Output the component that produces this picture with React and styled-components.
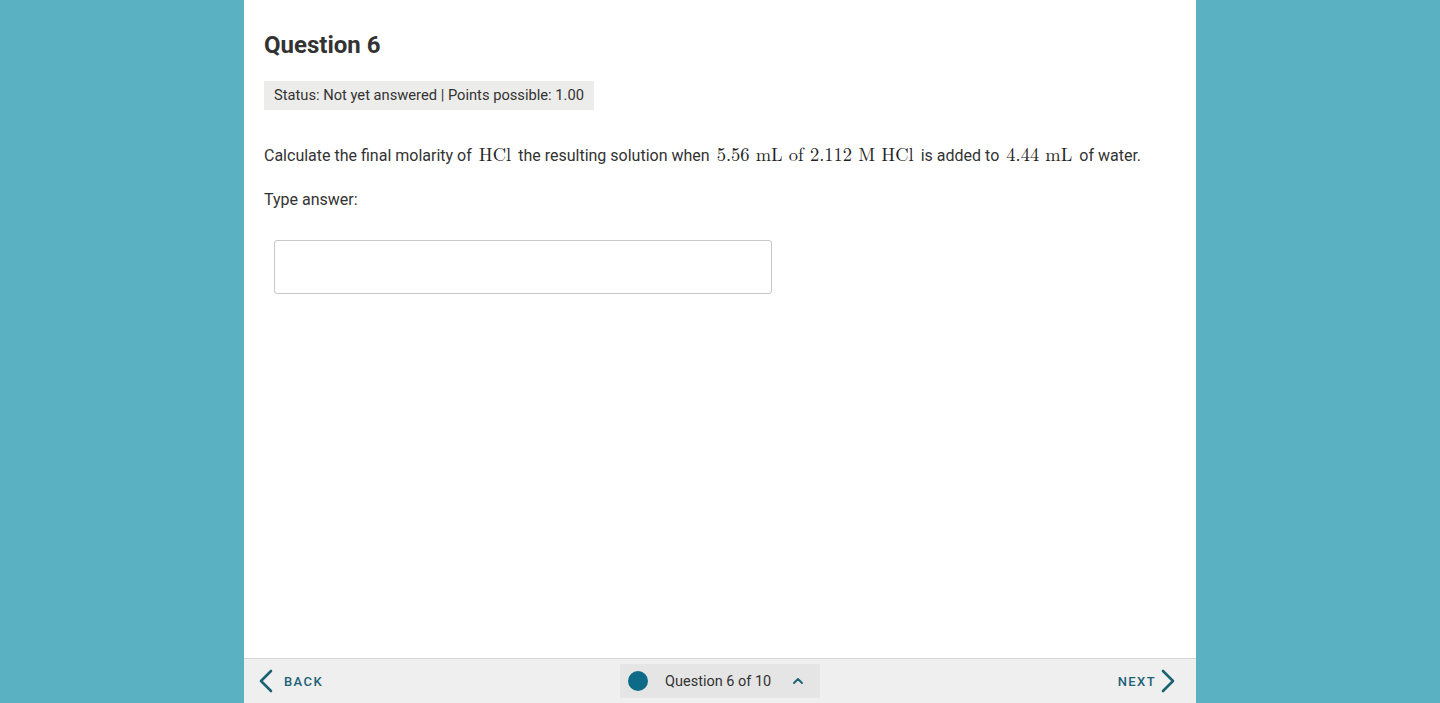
import React from "react";
import styled, { createGlobalStyle } from "styled-components";

const Global = createGlobalStyle`
  html, body {
    margin: 0;
    padding: 0;
    height: 100%;
  }
  body {
    background: #59b1c1;
    font-family: Roboto, "Liberation Sans", sans-serif;
    color: #333;
  }
  #root {
    height: 100%;
  }
`;

const Page = styled.div`
  height: 703px;
  display: flex;
  justify-content: center;
`;

const Panel = styled.main`
  width: 952px;
  background: #fff;
  display: flex;
  flex-direction: column;
`;

const Body = styled.section`
  flex: 1;
  padding: 29px 20px 0 20px;
`;

const Title = styled.h1`
  margin: 0;
  font-size: 24px;
  font-weight: 700;
  color: #333;
  line-height: 32px;
`;

const Status = styled.div`
  display: inline-block;
  margin-top: 20px;
  background: #ececea;
  padding: 0 10px;
  height: 29px;
  line-height: 29px;
  font-size: 14.7px;
  color: #333;
`;

const Prompt = styled.p`
  margin: 29px 0 0 0;
  font-size: 16px;
  line-height: 28px;
  color: #333;
`;

const Math = styled.span`
  font-family: "Latin Modern Roman", "Liberation Serif", serif;
  font-size: 18.5px;
  margin: 0 7px;
  color: #222;
`;

const Label = styled.p`
  margin: 18px 0 0 0;
  font-size: 16px;
  line-height: 24px;
`;

const Answer = styled.input`
  display: block;
  margin: 28px 0 0 10px;
  width: 498px;
  height: 54px;
  box-sizing: border-box;
  border: 1px solid #c9c9c9;
  border-radius: 3px;
  box-shadow: inset 0 0 1px rgba(0, 0, 0, 0.1);
  outline: none;
`;

const Footer = styled.footer`
  height: 44px;
  border-top: 1px solid #d6d6d6;
  background: #efefef;
  display: flex;
  align-items: center;
  justify-content: space-between;
  padding: 0 21px 0 15px;
`;

const NavButton = styled.button`
  display: flex;
  align-items: center;
  gap: ${(p) => (p.$right ? "5px" : "11px")};
  background: none;
  border: none;
  padding: 0;
  font-family: Roboto, "Liberation Sans", sans-serif;
  font-size: 13px;
  font-weight: 500;
  letter-spacing: 1.4px;
  color: #1c6275;
  cursor: pointer;
  width: 120px;
  justify-content: ${(p) => (p.$right ? "flex-end" : "flex-start")};
`;

const Picker = styled.div`
  display: flex;
  align-items: center;
  height: 34px;
  width: 200px;
  box-sizing: border-box;
  background: #e5e5e5;
  padding: 0 14px 0 8px;
  margin-left: 6px;
`;

const Dot = styled.span`
  width: 20px;
  height: 20px;
  border-radius: 50%;
  background: #0e6b87;
`;

const PickerText = styled.span`
  margin-left: 17px;
  font-size: 14.5px;
  color: #333;
  flex: 1;
`;

const SideChevron = ({ dir }) => (
  <svg width="14" height="24" viewBox="0 0 14 24" fill="none">
    <path
      d={dir === "left" ? "M12 2 L2 12 L12 22" : "M2 2 L12 12 L2 22"}
      stroke="#1c6275"
      strokeWidth="2.6"
      strokeLinecap="round"
      strokeLinejoin="round"
    />
  </svg>
);

const UpChevron = () => (
  <svg width="16" height="16" viewBox="0 0 24 24" fill="none">
    <path d="M6 15 L12 9 L18 15" stroke="#1c6275" strokeWidth="2.8" strokeLinecap="round" strokeLinejoin="round" />
  </svg>
);

export default function App() {
  return (
    <Page>
      <Global />
      <Panel>
        <Body>
          <Title>Question 6</Title>
          <Status>Status: Not yet answered | Points possible: 1.00</Status>
          <Prompt>
            Calculate the final molarity of<Math>HCl</Math>the resulting solution when
            <Math>5.56 mL of 2.112 M HCl</Math>is added to<Math>4.44 mL</Math>of water.
          </Prompt>
          <Label>Type answer:</Label>
          <Answer type="text" aria-label="answer" />
        </Body>
        <Footer>
          <NavButton>
            <SideChevron dir="left" />
            BACK
          </NavButton>
          <Picker>
            <Dot />
            <PickerText>Question 6 of 10</PickerText>
            <UpChevron />
          </Picker>
          <NavButton $right>
            NEXT
            <SideChevron dir="right" />
          </NavButton>
        </Footer>
      </Panel>
    </Page>
  );
}
